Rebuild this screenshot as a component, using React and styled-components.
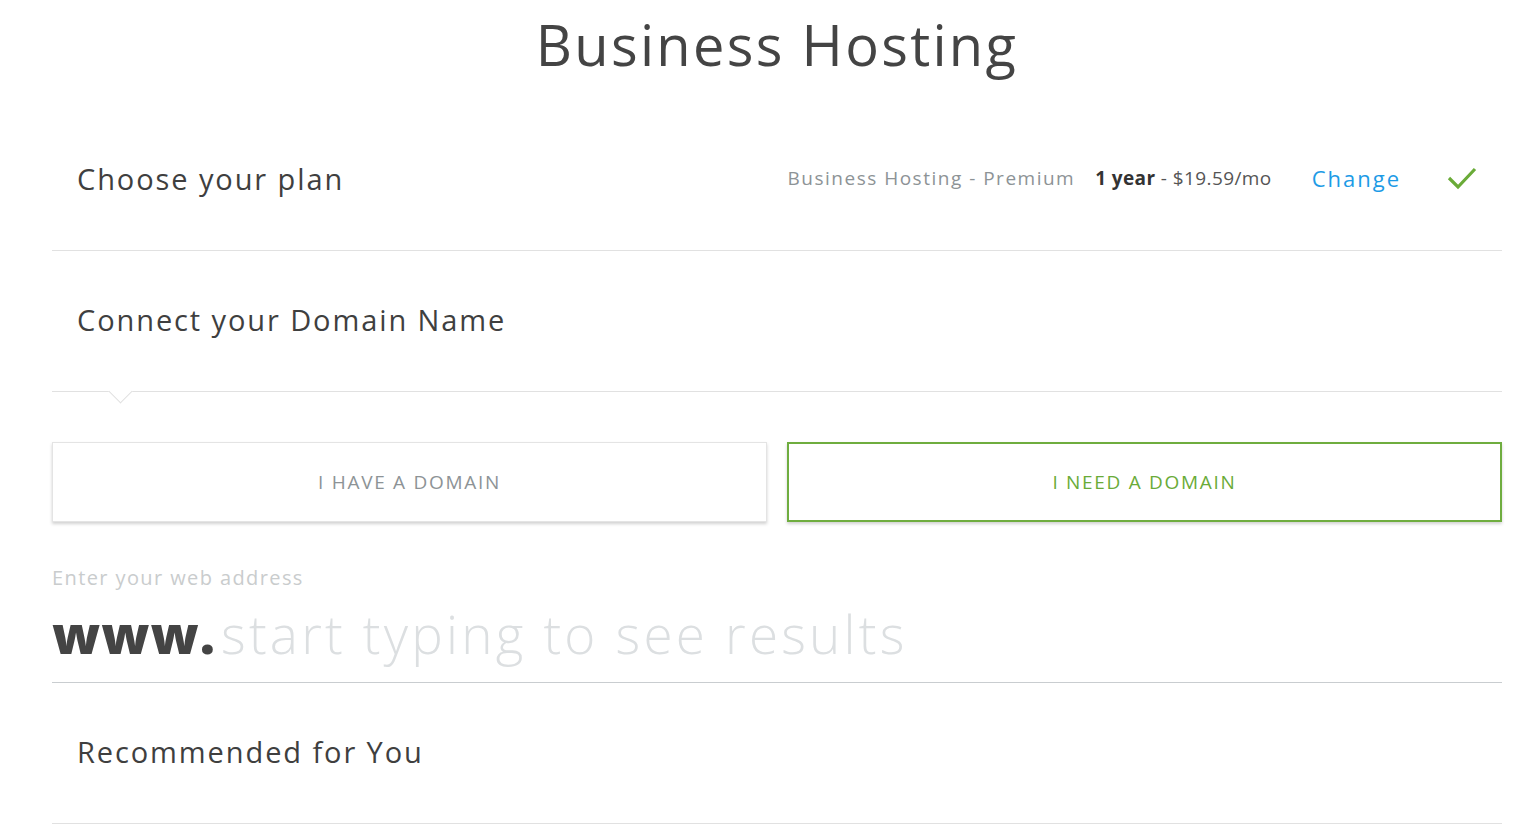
import React from "react";
import styled, { createGlobalStyle } from "styled-components";

const Global = createGlobalStyle`
  html, body { margin: 0; padding: 0; background: #fff; }
  body { font-family: "Open Sans", "Noto Sans", sans-serif; color: #444; }
  * { box-sizing: border-box; }
`;

const Page = styled.div`
  width: 1539px;
  padding: 0 37px 0 52px;
`;

const Title = styled.h1`
  margin: 0;
  height: 110px;
  padding-top: 9px;
  text-align: center;
  font-weight: 400;
  font-size: 56px;
  line-height: 70px;
  color: #444;
  letter-spacing: 2.3px;
`;

const Row = styled.div`
  position: relative;
  height: 141px;
  padding: 0 25px 4px;
  display: flex;
  align-items: center;
  justify-content: space-between;
  border-bottom: 1px solid #e1e1e1;
`;

const RowTitle = styled.h2`
  margin: 0;
  font-size: 29px;
  font-weight: 400;
  color: #3f3f3f;
  letter-spacing: 1.9px;
`;

const Summary = styled.div`
  display: flex;
  align-items: center;
`;

const PlanName = styled.span`
  font-size: 19px;
  color: #8d9396;
  letter-spacing: 1.5px;
  margin-right: 20px;
`;

const Term = styled.span`
  font-size: 19px;
  color: #555;
  letter-spacing: 0.4px;
  b { font-weight: 700; color: #333; }
`;

const ChangeLink = styled.a`
  font-size: 22px;
  color: #1d9be6;
  letter-spacing: 2px;
  margin-left: 40px;
  cursor: pointer;
`;

const Check = styled.svg`
  margin-left: 46px;
  width: 30px;
  height: 24px;
`;

const Notch = styled.span`
  position: absolute;
  left: 60px;
  bottom: -9px;
  width: 17px;
  height: 17px;
  background: #fff;
  border-right: 1px solid #e1e1e1;
  border-bottom: 1px solid #e1e1e1;
  transform: rotate(45deg);
`;

const Choices = styled.div`
  display: grid;
  grid-template-columns: 1fr 1fr;
  gap: 20px;
  margin-top: 50px;
`;

const Choice = styled.button`
  height: 80px;
  background: #fff;
  border: ${(p) => (p.$active ? "2px solid #6fad3f" : "1px solid #e4e4e4")};
  box-shadow: 0 2px 3px rgba(0, 0, 0, 0.18);
  font-family: inherit;
  font-size: 19px;
  letter-spacing: 1.7px;
  color: ${(p) => (p.$active ? "#6aab38" : "#8d9396")};
  text-transform: uppercase;
  cursor: pointer;
`;

const Label = styled.div`
  margin-top: 42px;
  font-size: 20px;
  letter-spacing: 1.4px;
  color: #c9cccd;
`;

const AddressLine = styled.div`
  display: flex;
  align-items: baseline;
  height: 92px;
  padding-top: 6px;
  border-bottom: 1px solid #c9cdd0;
`;

const Prefix = styled.span`
  font-size: 53px;
  font-weight: 800;
  letter-spacing: 1px;
  color: #444;
  margin-right: 5px;
`;

const AddressInput = styled.input`
  border: none;
  outline: none;
  flex: 1;
  padding: 0;
  font-family: inherit;
  font-size: 53px;
  font-weight: 300;
  letter-spacing: 3.2px;
  color: #444;
  background: transparent;
  &::placeholder { color: #dcdfe1; }
`;

export default function App() {
  return (
    <Page>
      <Global />
      <Title>Business Hosting</Title>
      <Row>
        <RowTitle>Choose your plan</RowTitle>
        <Summary>
          <PlanName>Business Hosting - Premium</PlanName>
          <Term><b>1 year</b> - $19.59/mo</Term>
          <ChangeLink>Change</ChangeLink>
          <Check viewBox="0 0 30 24">
            <path d="M2 12 L11 21 L28 3" fill="none" stroke="#6aab38" strokeWidth="3.2" />
          </Check>
        </Summary>
      </Row>
      <Row>
        <RowTitle>Connect your Domain Name</RowTitle>
        <Notch />
      </Row>
      <Choices>
        <Choice>I have a domain</Choice>
        <Choice $active>I need a domain</Choice>
      </Choices>
      <Label>Enter your web address</Label>
      <AddressLine>
        <Prefix>www.</Prefix>
        <AddressInput placeholder="start typing to see results" />
      </AddressLine>
      <Row>
        <RowTitle>Recommended for You</RowTitle>
      </Row>
    </Page>
  );
}
